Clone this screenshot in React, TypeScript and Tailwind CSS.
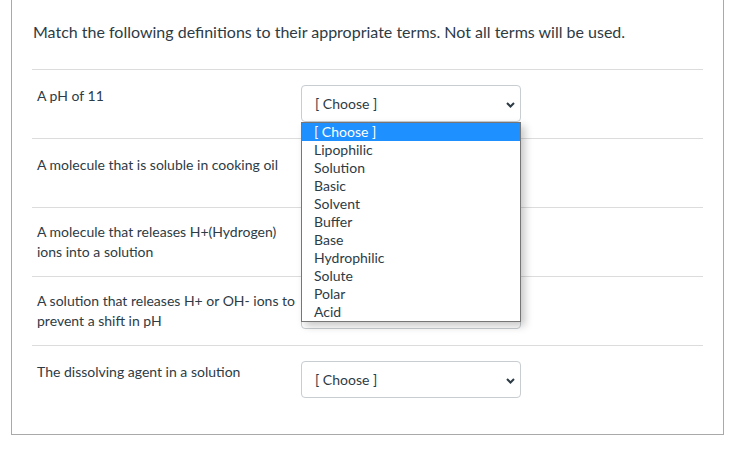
import React from "react";

const options = [
  "Lipophilic",
  "Solution",
  "Basic",
  "Solvent",
  "Buffer",
  "Base",
  "Hydrophilic",
  "Solute",
  "Polar",
  "Acid",
];

const rows: { label: string; twoLine: boolean }[] = [
  { label: "A pH of 11", twoLine: false },
  { label: "A molecule that is soluble in cooking oil", twoLine: false },
  { label: "A molecule that releases H+(Hydrogen) ions into a solution", twoLine: true },
  { label: "A solution that releases H+ or OH- ions to prevent a shift in pH", twoLine: true },
  { label: "The dissolving agent in a solution", twoLine: false },
];

function Chevron() {
  return (
    <svg width="9" height="6" viewBox="0 0 9 6" className="absolute right-[5px] top-[16px]">
      <path d="M1 1 L4.5 4.5 L8 1" fill="none" stroke="#2d3b45" strokeWidth="2" />
    </svg>
  );
}

function SelectBox({ open, covered }: { open: boolean; covered: boolean }) {
  return (
    <div className="relative w-[220px] h-[37px]">
      <div className="w-full h-full border border-[#c7cdd1] rounded-[4px] bg-white pl-[13px] text-[14px] leading-[35px] text-[#2d3b45] relative">
        {covered ? null : "[ Choose ]"}
        {covered ? null : <Chevron />}
      </div>
      {open && (
        <div className="absolute left-0 top-[37px] z-10 w-[220px] bg-white border border-[#767676] shadow-[4px_4px_8px_rgba(0,0,0,0.22)]">
          <div className="h-[18px] leading-[17px] bg-[#1e90ff] text-white pl-[12px] text-[14px]">
            [ Choose ]
          </div>
          {options.map((o) => (
            <div key={o} className="h-[18px] leading-[17px] pl-[12px] text-[14px] text-[#2d3b45]">
              {o}
            </div>
          ))}
        </div>
      )}
    </div>
  );
}

export default function App() {
  return (
    <div className="w-[745px] h-[467px] bg-white font-['Lato','Noto_Sans',sans-serif] text-[#2d3b45]">
      <div className="ml-[11px] w-[713px] border-x border-b border-[#a9a9a9] px-5 pt-5 pb-5">
        <p className="text-[16px] leading-6 pl-px">
          Match the following definitions to their appropriate terms. Not all terms will be used.
        </p>
        <div className="mt-[25px]">
          {rows.map((r, i) => (
            <div key={i} className="h-[69px] border-t border-[#dcdcdc] flex">
              <div
                className={
                  "w-[269px] pl-[5px] pr-[3px] text-[14px] leading-5 " +
                  (r.twoLine ? "pt-[14px]" : "pt-4")
                }
              >
                {r.label}
              </div>
              <div className="pt-[15px]">
                <SelectBox open={i === 0} covered={i >= 1 && i <= 3} />
              </div>
            </div>
          ))}
        </div>
      </div>
    </div>
  );
}
